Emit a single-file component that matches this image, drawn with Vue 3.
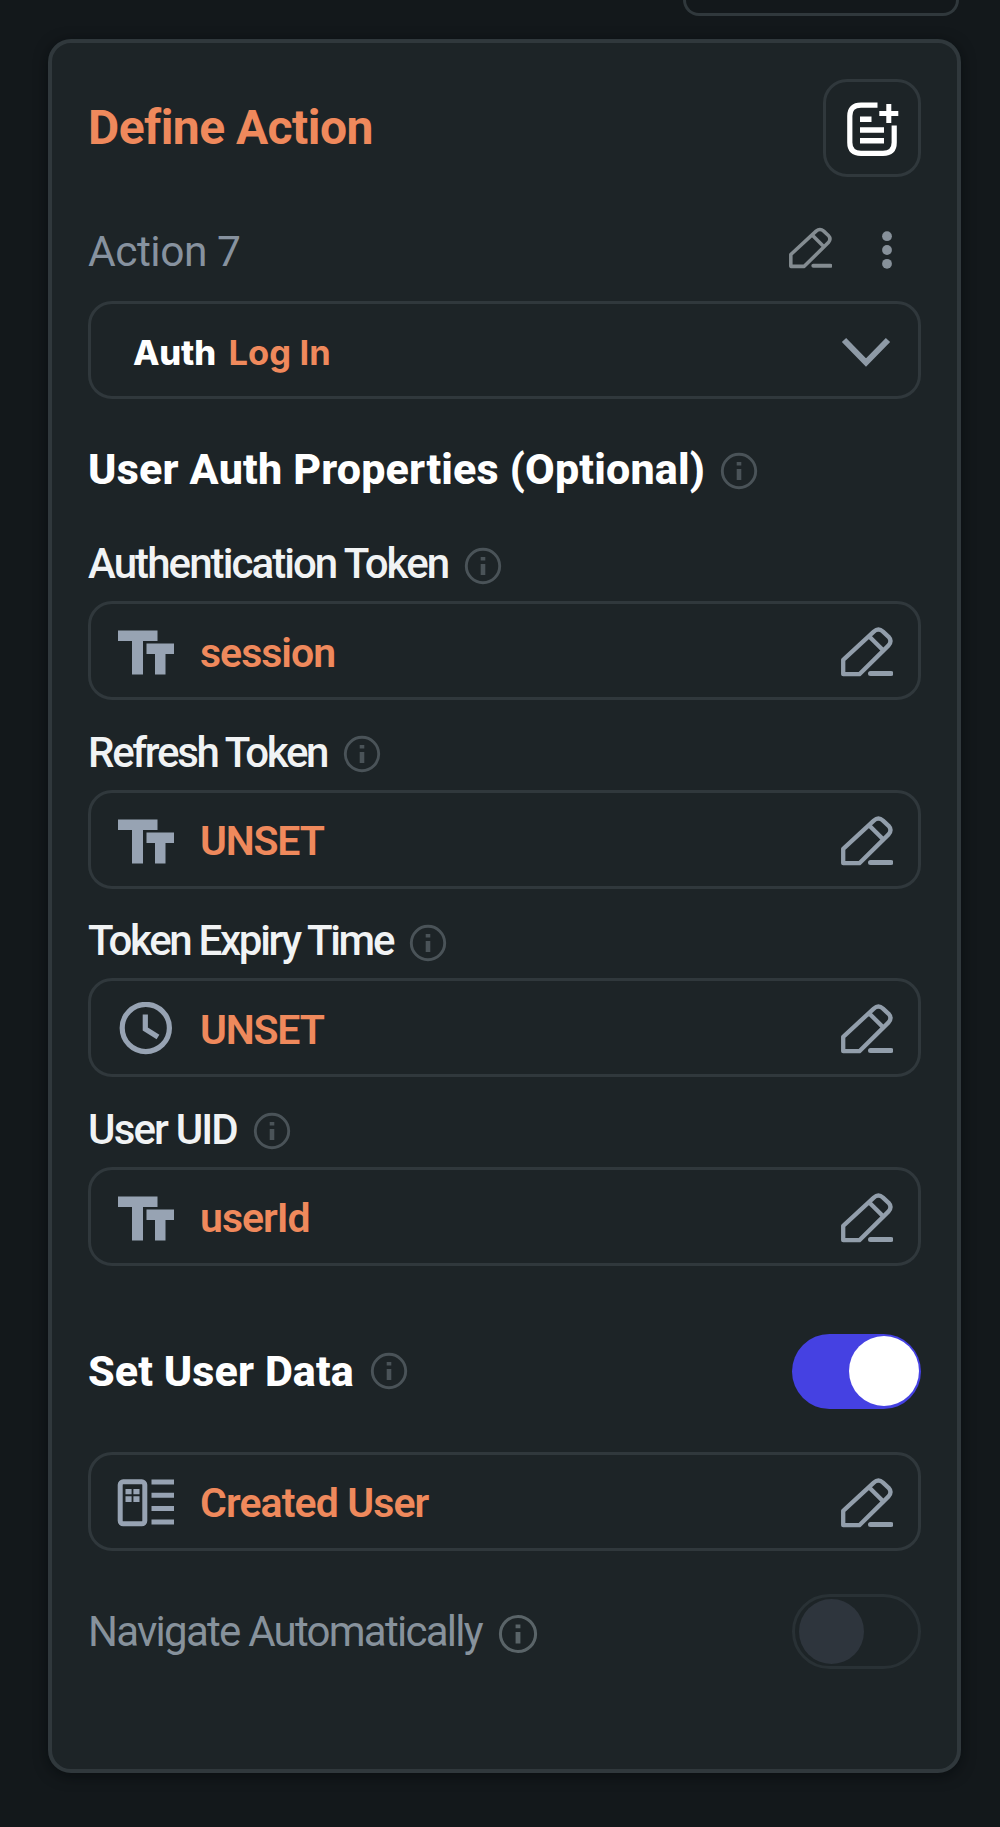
<script setup>
import { ref } from 'vue'

const fields = [
  { label: 'Authentication Token', value: 'session', icon: 'text', ls: -1.93, vs: -1 },
  { label: 'Refresh Token', value: 'UNSET', icon: 'text', ls: -2.3, vs: -1.2 },
  { label: 'Token Expiry Time', value: 'UNSET', icon: 'clock', ls: -2.3, vs: -1.2 },
  { label: 'User UID', value: 'userId', icon: 'text', ls: -1.85, vs: -1 },
]
const setUserData = ref(true)
const navigateAutomatically = ref(false)
</script>

<template>
  <div class="page">
    <svg class="defs" width="0" height="0" aria-hidden="true">
      <symbol id="pencil" viewBox="0 0 52 50">
        <path d="M2.2 47.2V32.8L32.8 4.6Q37.4 0.6 42 4.6L47.6 9.8Q51.4 14 47.6 18.4L18.4 47.2ZM28 9.2L41.6 22.8" fill="none" stroke="currentColor" stroke-width="4.3" stroke-linejoin="round" />
        <path d="M29.5 46.5H50" stroke="currentColor" stroke-width="5" stroke-linecap="round" />
      </symbol>
      <symbol id="info" viewBox="0 0 38 38">
        <circle cx="19" cy="19" r="16.7" fill="none" stroke="currentColor" stroke-width="2.9" />
        <path d="M19 17V28M19 10V13.5" stroke="currentColor" stroke-width="4.6" />
      </symbol>
    </svg>

    <div class="previous"></div>

    <section class="card">
      <header class="header">
        <h1>Define Action</h1>
        <button class="add" aria-label="Add note">
          <svg width="54" height="56" viewBox="0 0 54 56" fill="none" stroke="#fff" stroke-width="5.2">
            <path d="M31.5 4.2H15Q3.8 4.2 3.8 15V41.5Q3.8 52.3 15 52.3H37Q48.2 52.3 48.2 41.5V24.5" />
            <path d="M14 18.2H25.5M14 29H38M14 39.8H38" stroke-width="5.4" />
            <path d="M42.8 3V22M33.3 12.5H52.3" stroke-width="5" />
          </svg>
        </button>
      </header>

      <div class="action">
        <span class="action-name">Action 7</span>
        <svg class="action-edit" width="43" height="42"><use href="#pencil" /></svg>
        <svg class="dots" width="12" height="40" viewBox="0 0 12 40" fill="#87919a">
          <circle cx="6" cy="6.2" r="4.9" /><circle cx="6" cy="20" r="4.9" /><circle cx="6" cy="33.8" r="4.9" />
        </svg>
      </div>

      <div class="box select">
        <b>Auth</b><b class="accent">Log In</b>
        <svg class="chevron" width="50" height="32" viewBox="0 0 50 32"><path d="M3 4L25 26.5L47 4" fill="none" stroke="#8e9aa6" stroke-width="6" /></svg>
      </div>

      <div class="heading first">
        <h2>User Auth Properties (Optional)</h2>
        <svg class="info" width="38" height="38"><use href="#info" /></svg>
      </div>

      <div v-for="f in fields" :key="f.label" class="field">
        <div class="label">
          <span :style="{ letterSpacing: f.ls + 'px' }">{{ f.label }}</span>
          <svg class="info" width="38" height="38"><use href="#info" /></svg>
        </div>
        <div class="box">
          <svg v-if="f.icon === 'text'" class="kind" width="58" height="54" viewBox="0 0 58 54">
            <path d="M1 5.5H40.5V16H26V49.5H15V16H1ZM29.5 18.5H57V29H48.5V49.5H38V29H29.5Z" fill="#97a3b3" />
          </svg>
          <svg v-else class="kind" width="58" height="54" viewBox="0 0 58 54" fill="none" stroke="#97a3b3">
            <circle cx="28.8" cy="26" r="23.6" stroke-width="5.2" />
            <path d="M28.3 12.5V27L41 35" stroke-width="5.2" />
          </svg>
          <span class="value" :style="{ letterSpacing: f.vs + 'px' }">{{ f.value }}</span>
          <svg class="edit" width="52" height="50"><use href="#pencil" /></svg>
        </div>
      </div>

      <div class="heading data">
        <h2>Set User Data</h2>
        <svg class="info" width="38" height="38"><use href="#info" /></svg>
        <button class="toggle" :class="{ on: setUserData }" aria-label="Set User Data" @click="setUserData = !setUserData"><i></i></button>
      </div>

      <div class="box">
        <svg class="kind" width="58" height="54" viewBox="0 0 58 54" fill="none" stroke="#97a3b3">
          <rect x="3.2" y="5.8" width="24.6" height="42" rx="3" stroke-width="5" />
          <path d="M8.5 13H14.6V18.3H8.5ZM16.4 13H22.5V18.3H16.4ZM8.5 20.3H14.6V26H8.5ZM16.4 20.3H22.5V26H16.4Z" fill="#97a3b3" stroke="none" />
          <path d="M34.5 6H57M34.5 19.2H57M34.5 32.4H57M34.5 46H57" stroke-width="5" />
        </svg>
        <span class="value created">Created User</span>
        <svg class="edit" width="52" height="50"><use href="#pencil" /></svg>
      </div>

      <div class="navigate">
        <span>Navigate Automatically</span>
        <svg class="info big" width="40" height="40"><use href="#info" /></svg>
        <button class="toggle" :class="{ on: navigateAutomatically }" aria-label="Navigate Automatically" @click="navigateAutomatically = !navigateAutomatically"><i></i></button>
      </div>
    </section>
  </div>
</template>

<style>
body { background: #13181b; }
</style>

<style scoped>
* { box-sizing: border-box; }
.page {
  height: 1827px;
  overflow: hidden;
  background: #13181b;
  font-family: Roboto, "Liberation Sans", sans-serif;
  color: #fff;
}
.defs { display: block; }
svg { flex: none; display: block; }
span, h1, h2, b { white-space: nowrap; }
button { padding: 0; background: none; }
.previous {
  width: 276px;
  height: 16px;
  margin: 0 0 23px 683px;
  border: 3px solid #30383c;
  border-top: 0;
  border-radius: 0 0 22px 22px;
}
.card {
  width: 913px;
  height: 1734px;
  margin-left: 48px;
  padding: 36px 36px 0 36px;
  border: 4px solid #30383c;
  border-radius: 23px;
  background: #1d2427;
  box-shadow: 0 3px 14px rgba(4, 8, 10, 0.55);
}
.header { display: flex; align-items: center; justify-content: space-between; height: 98px; }
h1 { margin: 0; padding-bottom: 2px; font-size: 48px; font-weight: 700; letter-spacing: -0.55px; color: #ef895c; }
.add {
  display: flex;
  align-items: center;
  justify-content: center;
  width: 98px;
  height: 98px;
  padding: 2px 0 0 1px;
  border: 3px solid #30383c;
  border-radius: 24px;
}
.action { display: flex; align-items: flex-start; height: 123.5px; }
.action { padding-right: 28px; }
.action-name { flex: 1; padding-top: 50px; font-size: 42.5px; line-height: 50px; letter-spacing: -0.5px; color: #87929f; }
.action-edit { margin: 50px 49px 0 0; color: #848c91; }
.dots { margin-top: 52.5px; }
.box {
  display: flex;
  align-items: center;
  height: 99px;
  padding: 3px 25px 0 26px;
  border: 3px solid #30383c;
  border-radius: 24px;
}
.select { height: 98.5px; padding: 0 26px 0 42px; gap: 12.5px; font-family: Inter, sans-serif; font-size: 34.5px; }
.select b { padding-top: 6px; letter-spacing: 0.1px; }
.select b:first-child { font-weight: 800; letter-spacing: -0.2px; }
.accent, .value { color: #ef895c; }
.chevron { margin: 4px 1px 0 auto; }
.heading { display: flex; align-items: center; }
.first { height: 131.1px; padding-top: 13px; }
h2 { margin: 0; padding-bottom: 4px; font-size: 43px; font-weight: 800; letter-spacing: 0.2px; }
.info { margin-left: 16px; color: #4a5358; }
.first .info { margin-left: 15px; }
.big { margin: 5px 0 0 16px; color: #5a6468; }
.label { display: flex; align-items: center; height: 89.6px; padding-top: 18.6px; font-size: 42px; font-weight: 500; color: #f1f3f4; }
.first + .field .label { height: 71px; padding-top: 0; }
.label span { padding-bottom: 4px; }
.value { margin-left: 25px; padding-top: 1px; font-size: 41px; font-weight: 650; }
.created { letter-spacing: -0.9px; }
.edit { margin-left: auto; color: #929eab; }
.data { height: 186px; padding-top: 25px; }
.data h2 { padding: 0; letter-spacing: 0.1px; }
.toggle {
  display: flex;
  align-items: center;
  width: 129px;
  height: 75px;
  margin-left: auto;
  padding: 0 4px;
  border: 3px solid #293135;
  border-radius: 38px;
}
.toggle i { width: 65px; height: 65px; border-radius: 50%; background: #2e353d; }
.toggle.on { justify-content: flex-end; padding: 0 2px; border: 0; background: #4541e2; }
.toggle.on i { width: 70px; height: 70px; background: #fff; }
.navigate { display: flex; align-items: center; height: 160px; padding-top: 2px; font-size: 42px; color: #87929c; letter-spacing: -1.75px; }
</style>
